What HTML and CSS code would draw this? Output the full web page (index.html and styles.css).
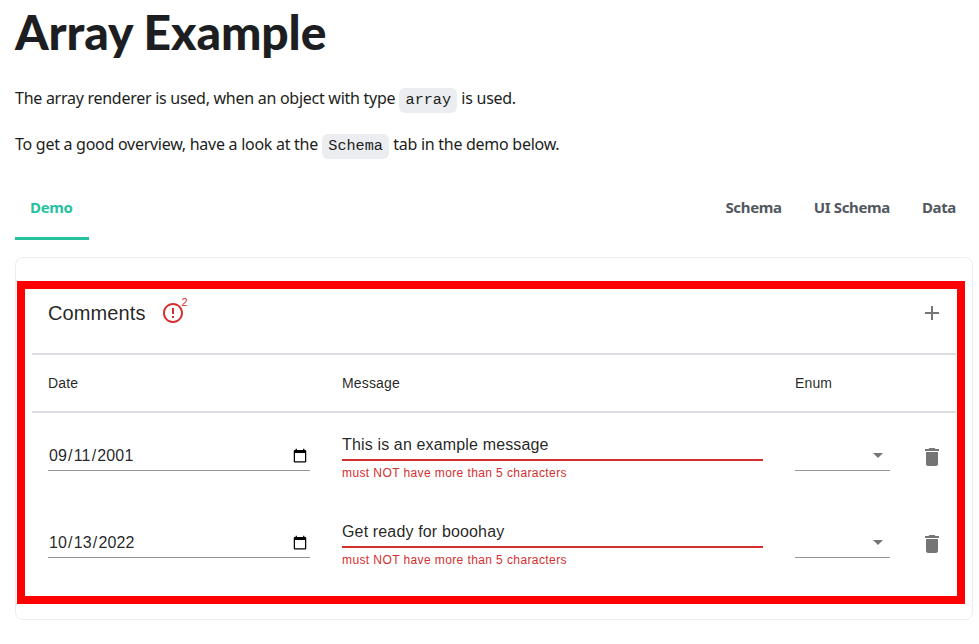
FILE: index.html
```html
<!DOCTYPE html>
<html lang="en">
<head>
  <meta charset="UTF-8" />
  <meta name="viewport" content="width=device-width, initial-scale=1.0"/>
  <title>Array Example</title>
  <link rel="stylesheet" href="styles.css">
</head>
<body>
  <h1>Array Example</h1>
  <p>The array renderer is used, when an object with type <code>array</code> is used.</p>
  <p>To get a good overview, have a look at the <code>Schema</code> tab in the demo below.</p>

  <ul class="tabs">
    <li class="tab active">Demo</li>
    <li class="tab push">Schema</li>
    <li class="tab">UI Schema</li>
    <li class="tab">Data</li>
  </ul>

  <div class="card">
    <div class="highlight">
      <div class="toolbar">
        <span class="toolbar-title">Comments</span>
        <span class="error-badge">
          <svg class="icon error-icon" viewBox="0 0 24 24"><path d="M11 15h2v2h-2zm0-8h2v6h-2zm.99-5C6.47 2 2 6.48 2 12s4.47 10 9.99 10C17.52 22 22 17.52 22 12S17.52 2 11.99 2zM12 20c-4.42 0-8-3.58-8-8s3.58-8 8-8 8 3.58 8 8-3.58 8-8 8z"/></svg>
          <span class="badge-count">2</span>
        </span>
        <svg class="icon add-icon" viewBox="0 0 24 24"><path d="M19 13h-6v6h-2v-6H5v-2h6V5h2v6h6v2z"/></svg>
      </div>

      <table class="comments">
        <thead>
          <tr>
            <th class="col-date">Date</th>
            <th class="col-message">Message</th>
            <th class="col-enum">Enum</th>
            <th class="col-action"></th>
          </tr>
        </thead>
        <tbody>
          <tr>
            <td><input class="field date-field" type="date" value="2001-09-11"></td>
            <td>
              <input class="field message-field" type="text" value="This is an example message">
              <div class="helper">must NOT have more than 5 characters</div>
            </td>
            <td>
              <div class="select-field">
                <svg class="icon caret-icon" viewBox="0 0 24 24"><path d="M7 10l5 5 5-5z"/></svg>
              </div>
            </td>
            <td class="action-cell">
              <svg class="icon trash-icon" viewBox="0 0 24 24"><path d="M6 19c0 1.1.9 2 2 2h8c1.1 0 2-.9 2-2V7H6v12zM19 4h-3.5l-1-1h-5l-1 1H5v2h14V4z"/></svg>
            </td>
          </tr>
          <tr>
            <td><input class="field date-field" type="date" value="2022-10-13"></td>
            <td>
              <input class="field message-field" type="text" value="Get ready for booohay">
              <div class="helper">must NOT have more than 5 characters</div>
            </td>
            <td>
              <div class="select-field">
                <svg class="icon caret-icon" viewBox="0 0 24 24"><path d="M7 10l5 5 5-5z"/></svg>
              </div>
            </td>
            <td class="action-cell">
              <svg class="icon trash-icon" viewBox="0 0 24 24"><path d="M6 19c0 1.1.9 2 2 2h8c1.1 0 2-.9 2-2V7H6v12zM19 4h-3.5l-1-1h-5l-1 1H5v2h14V4z"/></svg>
            </td>
          </tr>
        </tbody>
      </table>
    </div>
  </div>
</body>
</html>
```

FILE: styles.css
```css
body {
  margin: 0;
  padding: 0 6px 0 15px;
  font-family: "Noto Sans", sans-serif;
  font-size: 16px;
  color: #1c1e21;
  background-color: #fff;
}
h1 {
  margin: 0 0 21px;
  font-family: Lato, sans-serif;
  font-size: 48px;
  font-weight: 900;
  line-height: 64px;
  letter-spacing: -0.1px;
}
p {
  margin: 0 0 20px;
  line-height: 26px;
  letter-spacing: -0.27px;
}
p + p {
  margin-top: -2px;
}
code {
  padding: 3px 6.4px 4px;
  font-family: "Liberation Mono", monospace;
  font-size: 15.2px;
  letter-spacing: 0;
  background-color: #ebedf0;
  border-radius: 6px;
}

.tabs {
  display: flex;
  margin: 0 1px 17px 0;
  padding: 0;
  list-style: none;
}
.tab {
  padding: 16px 16px 18px;
  font-weight: 700;
  font-size: 15px;
  line-height: 24px;
  letter-spacing: -0.35px;
  color: #525860;
  border-bottom: 3px solid transparent;
}
.tab.active {
  padding-left: 15px;
  color: #25c2a0;
  border-bottom-color: #25c2a0;
}
.tab.push {
  margin-left: auto;
}

.card {
  padding: 23px 7px 15px 1px;
  border: 1px solid #ebedf0;
  border-radius: 8px;
}
.highlight {
  padding-bottom: 9px;
  border: 8px solid #f00;
  font-family: "Liberation Sans", Arial, sans-serif;
  color: rgba(0,0,0,0.87);
}

.icon {
  display: block;
  width: 24px;
  height: 24px;
  fill: rgba(0,0,0,0.54);
}
.toolbar {
  display: flex;
  align-items: center;
  height: 64px;
  padding: 0 13px 16px 23px;
  box-sizing: border-box;
}
.toolbar-title {
  font-size: 20px;
  letter-spacing: 0.1px;
}
.error-badge {
  position: relative;
  margin-left: 15px;
}
.error-icon {
  fill: #d32f2f;
}
.badge-count {
  position: absolute;
  top: -6px;
  right: -3px;
  font-size: 11px;
  line-height: 14px;
  color: #d32f2f;
}
.add-icon {
  margin-left: auto;
}

.comments {
  width: 924px;
  margin: 0 1px 0 7px;
  table-layout: fixed;
  border-collapse: separate;
  border-spacing: 0;
  border-top: 2px solid #dadde1;
}
.comments th {
  height: 58px;
  padding: 0 16px;
  box-sizing: border-box;
  font-size: 14px;
  font-weight: 400;
  letter-spacing: 0.15px;
  text-align: left;
  border-bottom: 2px solid #dadde1;
}
.col-date { width: 294px; }
.col-message { width: 453px; }
.col-enum { width: 127px; }
.col-action { width: 50px; }

.comments td {
  padding: 16px;
  vertical-align: top;
}
.field {
  display: block;
  width: 100%;
  height: 32px;
  padding: 6px 0 4px;
  box-sizing: border-box;
  font-family: inherit;
  font-size: 16px;
  letter-spacing: 0.15px;
  color: inherit;
  background: none;
  border: 0;
  outline: 0;
}
.date-field {
  margin-top: 10px;
  border-bottom: 1px solid #949494;
}
.message-field {
  border-bottom: 2px solid #d32f2f;
}
.helper {
  margin-top: 2px;
  font-size: 12px;
  line-height: 21px;
  letter-spacing: 0.4px;
  color: #d32f2f;
}
.select-field {
  display: flex;
  justify-content: flex-end;
  align-items: center;
  height: 32px;
  margin-top: 10px;
  box-sizing: border-box;
  border-bottom: 1px solid #949494;
}
.comments .action-cell {
  padding: 32px 0 0 14px;
}
```
